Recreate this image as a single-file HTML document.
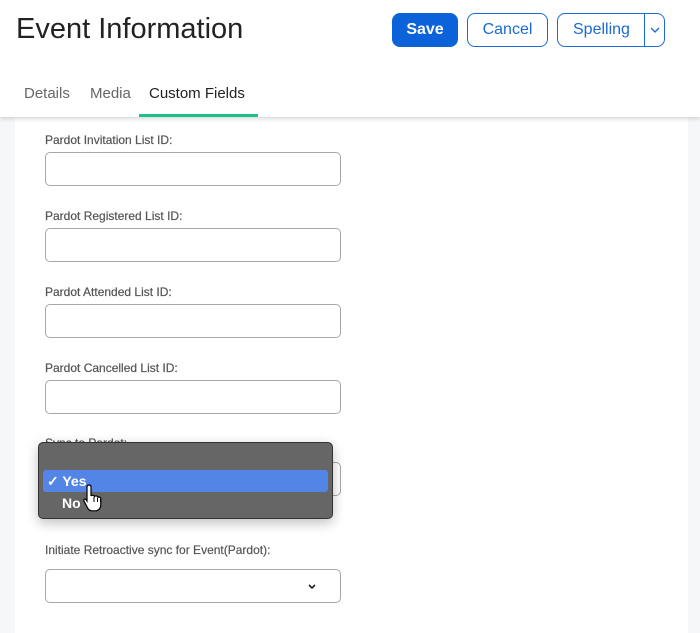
<!DOCTYPE html>
<html><head><style>
*{box-sizing:border-box;margin:0;padding:0}
body{width:700px;height:633px;overflow:hidden;background:#fff;font-family:"Liberation Sans",Arial,sans-serif;position:relative}
.hdr{position:absolute;left:0;top:0;width:700px;height:117px;background:#fff;box-shadow:0 2px 4px rgba(0,0,0,.15);z-index:2}
h1{position:absolute;left:16px;top:13px;font-size:29px;font-weight:normal;color:#222;letter-spacing:0}
.btn{position:absolute;top:13px;height:34px;border-radius:8px;font-size:16px;line-height:32px;text-align:center;border:1px solid #1a6ad8;color:#1a6ad8;background:#fff}
.tab{position:absolute;top:85px;font-size:15px;color:#666}
.side{position:absolute;top:117px;height:516px;background:#f6f7f9}
label{position:absolute;left:45px;font-size:12px;color:#555;-webkit-text-stroke:.2px #555}
.inp{position:absolute;left:45px;width:296px;height:34px;border:1px solid #a8a8a8;border-radius:5px;background:#fff}
</style></head><body>
<div class="hdr">
<h1>Event Information</h1>
<div class="btn" style="left:392px;width:66px;background:#0c63d9;color:#fff;font-weight:bold;border-color:#0c63d9">Save</div>
<div class="btn" style="left:467px;width:81px">Cancel</div>
<div class="btn" style="left:557px;width:108px;text-align:left;padding-left:15px">Spelling<span style="position:absolute;left:86px;top:0;width:1px;height:32px;background:#1a6ad8"></span><svg style="position:absolute;left:91px;top:12px" width="12" height="8" viewBox="0 0 12 8"><path d="M2 2l4 4 4-4" stroke="#1a6ad8" fill="none" stroke-width="1.3"/></svg></div>
<div class="tab" style="left:24px">Details</div>
<div class="tab" style="left:90px">Media</div>
<div class="tab" style="left:149px;color:#222">Custom Fields</div>
<div style="position:absolute;left:139px;top:114px;width:119px;height:3px;background:#1cc08a"></div>
</div>
<div class="side" style="left:0;width:15px"></div>
<div class="side" style="left:688px;width:12px"></div>
<label style="top:133px">Pardot Invitation List ID:</label><div class="inp" style="top:152px"></div>
<label style="top:209px">Pardot Registered List ID:</label><div class="inp" style="top:228px"></div>
<label style="top:285px">Pardot Attended List ID:</label><div class="inp" style="top:304px"></div>
<label style="top:361px">Pardot Cancelled List ID:</label><div class="inp" style="top:380px"></div>
<label style="top:436px">Sync to Pardot:</label><div class="inp" style="top:462px"></div>
<label style="top:543px">Initiate Retroactive sync for Event(Pardot):</label>
<div class="inp" style="top:569px"><svg style="position:absolute;left:261px;top:13px" width="10" height="8" viewBox="0 0 10 8"><path d="M2 2l3 3 3-3" stroke="#222" fill="none" stroke-width="1.6"/></svg></div>
<div style="position:absolute;left:38px;top:442px;width:295px;height:77px;background:#666;border:1px solid #333;border-radius:5px;box-shadow:0 4px 12px rgba(0,0,0,.25);z-index:3">
<div style="position:absolute;left:4px;top:27px;width:285px;height:22px;background:#5385e6;border-radius:3px;color:#fff;font-size:14px;font-weight:bold;line-height:22px;padding-left:4px">✓ Yes</div>
<div style="position:absolute;left:23px;top:50px;color:#fff;font-size:14px;font-weight:bold;line-height:20px">No</div>
<svg style="position:absolute;left:44px;top:40px" width="22" height="30" viewBox="0 0 22 30"><path d="M6 2c1.3 0 2 .8 2 2v9c.5-1 3-1 3.5.5.8-1 3-.8 3.300.8 1-.8 3-.3 3 1.5v6c0 3-2 6-5 6h-4c-2 0-3-1-4-2.5L1 18c-.8-1.3.6-2.7 2-1.5l1 1.5V4c0-1.200.7-2 2-2z" fill="#fff" stroke="#000" stroke-width="1.2"/><path d="M11 14v5M14.5 15v4M17.5 16v3" stroke="#000" stroke-width="1"/></svg>
</div>
</body></html>
